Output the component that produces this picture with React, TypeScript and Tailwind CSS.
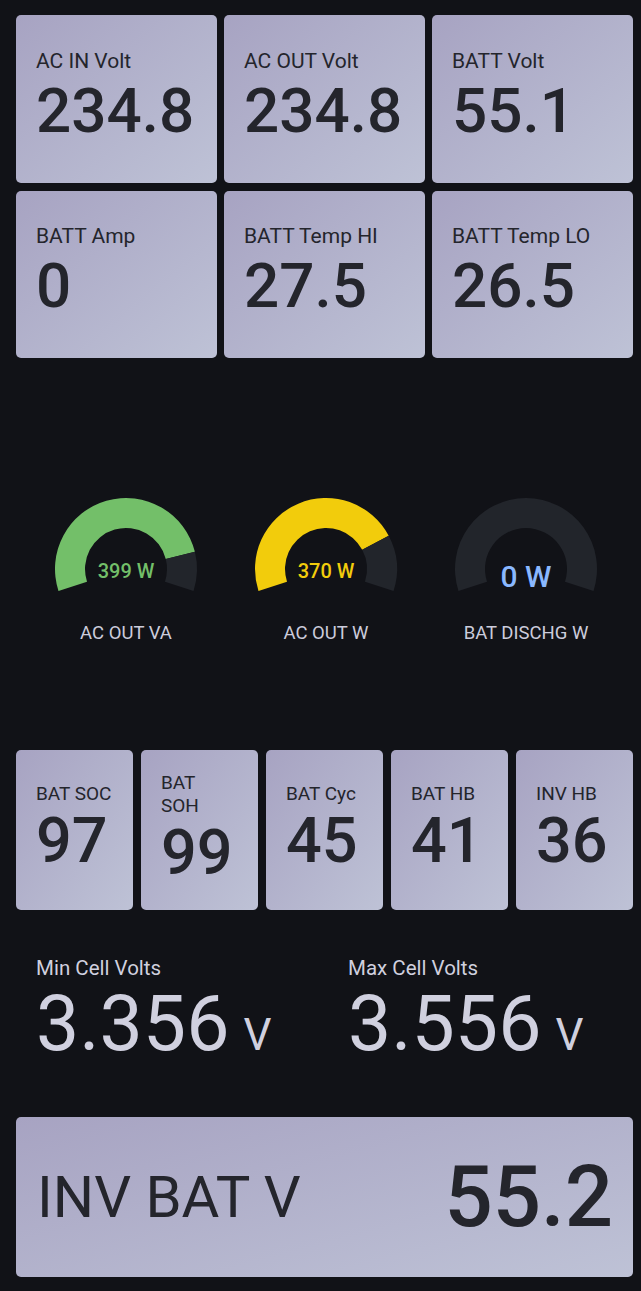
import React from "react";

const FONT = { fontFamily: "Roboto, 'Noto Sans', 'Liberation Sans', sans-serif" };

function pt(cx: number, cy: number, r: number, deg: number) {
  const a = (deg * Math.PI) / 180;
  return [cx + r * Math.cos(a), cy - r * Math.sin(a)];
}

function arc(cx: number, cy: number, ro: number, ri: number, a0: number, a1: number) {
  const large = a0 - a1 > 180 ? 1 : 0;
  const [x0, y0] = pt(cx, cy, ro, a0);
  const [x1, y1] = pt(cx, cy, ro, a1);
  const [x2, y2] = pt(cx, cy, ri, a1);
  const [x3, y3] = pt(cx, cy, ri, a0);
  return `M ${x0} ${y0} A ${ro} ${ro} 0 ${large} 1 ${x1} ${y1} L ${x2} ${y2} A ${ri} ${ri} 0 ${large} 0 ${x3} ${y3} Z`;
}

function Gauge({ end, color, text, textColor, fontSize, textY, label }: { end: number | null; color: string; text: string; textColor: string; fontSize: number; textY: number; label: string }) {
  const cx = 80, cy = 78, ro = 71, ri = 41;
  return (
    <div className="flex w-[200px] flex-col items-center">
      <svg width="160" height="112" viewBox="0 0 160 112">
        {end !== null && <path d={arc(cx, cy, ro, ri, 198, end)} fill={color} />}
        <path d={arc(cx, cy, ro, ri, end === null ? 198 : end, -18)} fill="#22252b" />
        <text x={cx} y={textY} textAnchor="middle" fill={textColor} fontSize={fontSize} fontWeight={500} style={FONT}>
          {text}
        </text>
      </svg>
      <div className="mt-[20px] text-[18.5px] leading-[20px] text-[#ccccdc]" style={FONT}>
        {label}
      </div>
    </div>
  );
}

function TopCard({ label, value }: { label: string; value: string }) {
  return (
    <div className="flex h-full flex-1 flex-col justify-center rounded-[5px] bg-linear-to-br from-[#a7a3c2] to-[#bec2d6] px-[20px] pb-[8px] text-[#24252c]">
      <div className="text-[21px] leading-[25px] whitespace-nowrap">{label}</div>
      <div className="mt-[5px] text-[62px] leading-[63px] font-medium">{value}</div>
    </div>
  );
}

function SmallCard({ label, value }: { label: React.ReactNode; value: string }) {
  return (
    <div className="flex h-full flex-1 flex-col justify-center rounded-[5px] bg-linear-to-br from-[#a7a3c2] to-[#bec2d6] px-[20px] pb-[6px] text-[#24252c]">
      <div className="text-[19px] leading-[23px] whitespace-nowrap">{label}</div>
      <div className="mt-[4px] text-[63px] leading-[63px] font-medium">{value}</div>
    </div>
  );
}

function CellVolts({ label, value }: { label: string; value: string }) {
  return (
    <div className="flex flex-1 flex-col px-[20px] text-[#d0d0df]">
      <div className="text-[20.5px] leading-[24px]">{label}</div>
      <div className="mt-[7px] flex items-baseline leading-[75px]">
        <span className="text-[77px]">{value}</span>
        <span className="ml-[14px] text-[44px]">V</span>
      </div>
    </div>
  );
}

export default function App() {
  return (
    <div className="min-h-screen w-full bg-[#111217] pt-[15px] pr-[8px] pl-[16px]" style={FONT}>
      <div className="flex h-[168px] gap-[7px]">
        <TopCard label="AC IN Volt" value="234.8" />
        <TopCard label="AC OUT Volt" value="234.8" />
        <TopCard label="BATT Volt" value="55.1" />
      </div>
      <div className="mt-[8px] flex h-[167px] gap-[7px]">
        <TopCard label="BATT Amp" value="0" />
        <TopCard label="BATT Temp HI" value="27.5" />
        <TopCard label="BATT Temp LO" value="26.5" />
      </div>
      <div className="flex h-[392px] pt-[133px] pl-[10px]">
        <Gauge end={14} color="#73bf69" text="399 W" textColor="#73bf69" fontSize={20} textY={87} label="AC OUT VA" />
        <Gauge end={28} color="#f2cc0c" text="370 W" textColor="#f2cc0c" fontSize={20} textY={87} label="AC OUT W" />
        <Gauge end={null} color="#22252b" text="0 W" textColor="#8ab8ff" fontSize={30} textY={96} label="BAT DISCHG W" />
      </div>
      <div className="flex h-[160px] gap-[8px]">
        <SmallCard label="BAT SOC" value="97" />
        <SmallCard label={<>BAT<br />SOH</>} value="99" />
        <SmallCard label="BAT Cyc" value="45" />
        <SmallCard label="BAT HB" value="41" />
        <SmallCard label="INV HB" value="36" />
      </div>
      <div className="mt-[46px] flex gap-[7px]">
        <CellVolts label="Min Cell Volts" value="3.356" />
        <CellVolts label="Max Cell Volts" value="3.556" />
      </div>
      <div className="mt-[44px] flex h-[160px] items-center justify-between rounded-[5px] bg-linear-to-br from-[#a7a3c2] to-[#bec2d6] pr-[20px] pl-[21px] text-[#24252c]">
        <div className="text-[58px] leading-[60px]">INV BAT V</div>
        <div className="text-[85px] leading-[86px] font-medium">55.2</div>
      </div>
    </div>
  );
}
